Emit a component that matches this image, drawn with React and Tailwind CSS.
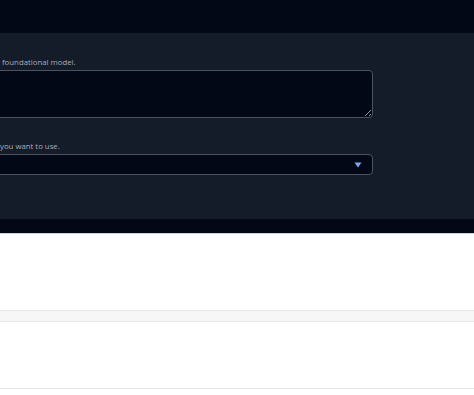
import React from "react";

const font = { fontFamily: '"Open Sans", "Noto Sans", sans-serif' };

function Caret() {
  return (
    <svg className="w-[8px] h-[6px]" viewBox="0 0 8 6">
      <polygon points="0.5,0.5 7.5,0.5 4,5.5" fill="#7ea6ee" />
    </svg>
  );
}

export default function App() {
  return (
    <div className="w-[474px] h-[395px] overflow-hidden bg-white" style={font}>
      {/* Top bar */}
      <header className="h-[33px] bg-[#030816]" />

      {/* Form panel */}
      <section className="h-[186px] bg-[#141b29] pt-[24px] pr-[101px]">
        <p className="pl-[2px] text-[7.8px] leading-[10px] text-[#a7aebb]">foundational model.</p>
        <textarea
          className="mt-[3px] block h-[48px] w-[calc(100%+4px)] -ml-[4px] rounded-[4px] border border-[#4b5262] bg-[#030816] outline-none"
          readOnly
        />
        <p className="mt-[23px] text-[7.8px] leading-[10px] text-[#a7aebb]">you want to use.</p>
        <div className="mt-[3px] -ml-[4px] h-[21px] rounded-[4px] border border-[#4b5262] bg-[#030816] flex items-center justify-end pr-[10px]">
          <Caret />
        </div>
      </section>

      {/* Footer strip */}
      <div className="h-[15px] bg-[#030816] border-b border-[#cfd3da]" />

      {/* Cards below */}
      <div className="h-[77px] bg-white border-b border-[#e6e7ea] shadow-[0_1px_2px_rgba(0,0,0,0.06)]" />
      <div className="h-[10px] bg-[#f7f7f8]" />
      <div className="h-[68px] bg-white border-t border-b border-[#e6e7ea]" />
    </div>
  );
}
